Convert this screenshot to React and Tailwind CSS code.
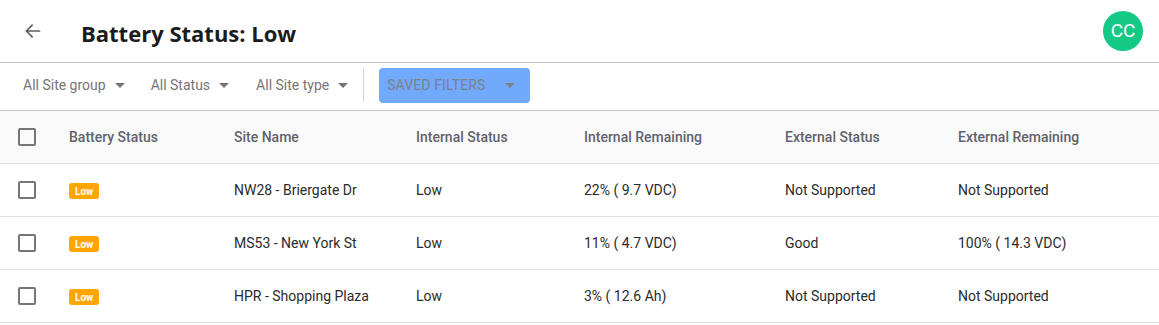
const ROWS = [
  {
    id: 1,
    site: "NW28 - Briergate Dr",
    internalStatus: "Low",
    internalRemaining: "22% ( 9.7 VDC)",
    externalStatus: "Not Supported",
    externalRemaining: "Not Supported",
  },
  {
    id: 2,
    site: "MS53 - New York St",
    internalStatus: "Low",
    internalRemaining: "11% ( 4.7 VDC)",
    externalStatus: "Good",
    externalRemaining: "100% ( 14.3 VDC)",
  },
  {
    id: 3,
    site: "HPR - Shopping Plaza",
    internalStatus: "Low",
    internalRemaining: "3% ( 12.6 Ah)",
    externalStatus: "Not Supported",
    externalRemaining: "Not Supported",
  },
];

const HEADERS = [
  "Battery Status",
  "Site Name",
  "Internal Status",
  "Internal Remaining",
  "External Status",
  "External Remaining",
];

const GRID =
  "grid grid-cols-[69px_165px_182px_168px_201px_173px_1fr] grid-rows-1 items-center";

/* ─── Small caret ─── */
const Caret = ({ className = "" }) => (
  <svg width="10" height="5" viewBox="0 0 10 5" className={className}>
    <path d="M0 0h10L5 5z" fill="currentColor" />
  </svg>
);

const Checkbox = () => (
  <div className="ml-[18px] w-[18px] h-[18px] rounded-[2px] border-2 border-[#757575]" />
);

const FilterSelect = ({ label }) => (
  <button className="flex items-center gap-[9px] text-[14px] text-[#757575]">
    {label}
    <Caret className="text-[#757575]" />
  </button>
);

export default function App() {
  return (
    <div className="w-[1159px] h-[325px] bg-white overflow-hidden font-['Roboto',sans-serif]">
      {/* Header */}
      <div className="h-[63px] flex items-center border-b border-[#c4c4c4] pt-[3px]">
        <button className="ml-[22px] w-[22px] h-[22px] flex items-center justify-center text-[#5c5c66] -mt-[3px]">
          <svg width="20" height="20" viewBox="0 0 24 24" fill="none">
            <path
              d="M20 12H5M11 5l-7 7 7 7"
              stroke="currentColor"
              strokeWidth="2"
              strokeLinecap="round"
              strokeLinejoin="round"
            />
          </svg>
        </button>
        <h1 className="ml-[37px] text-[22px] font-bold text-[#1c1c1c] font-['Open_Sans',sans-serif] leading-none">
          Battery Status: Low
        </h1>
        <div className="ml-auto mr-[16px] w-[40px] h-[40px] rounded-full bg-[#12c986] flex items-center justify-center text-white text-[19px] -mt-[3px]">
          CC
        </div>
      </div>

      {/* Filters */}
      <div className="h-[48px] flex items-center border-b border-[#c4c4c4] pl-[23px] pb-[3px]">
        <FilterSelect label="All Site group" />
        <div className="ml-[26px]">
          <FilterSelect label="All Status" />
        </div>
        <div className="ml-[27px]">
          <FilterSelect label="All Site type" />
        </div>
        <div className="ml-[15px] w-px h-[34px] bg-[#d4d4d4]" />
        <button className="ml-[15px] w-[151px] h-[35px] rounded-[4px] bg-[#71a9fd] flex items-center pl-[8px] gap-[20px] text-[14px] text-[#7c8189] uppercase tracking-[0.1px]">
          Saved Filters
          <Caret className="text-[#7c8189]" />
        </button>
      </div>

      {/* Table */}
      <div className={`${GRID} h-[53px] bg-[#fafafa] border-b border-[#e0e0e0]`}>
        <Checkbox />
        {HEADERS.map((h) => (
          <div key={h} className="text-[14px] font-medium text-[#62626f]">
            {h}
          </div>
        ))}
        <div />
      </div>

      {ROWS.map((r) => (
        <div
          key={r.id}
          className={`${GRID} h-[53px] border-b border-[#e0e0e0] text-[14px] text-[#2b2b2b]`}
        >
          <Checkbox />
          <div>
            <span className="inline-flex items-center h-[16px] px-[6px] rounded-[3px] bg-[#ffa500] text-white text-[10px] font-bold">
              Low
            </span>
          </div>
          <div>{r.site}</div>
          <div>{r.internalStatus}</div>
          <div>{r.internalRemaining}</div>
          <div>{r.externalStatus}</div>
          <div>{r.externalRemaining}</div>
          <div />
        </div>
      ))}
    </div>
  );
}
